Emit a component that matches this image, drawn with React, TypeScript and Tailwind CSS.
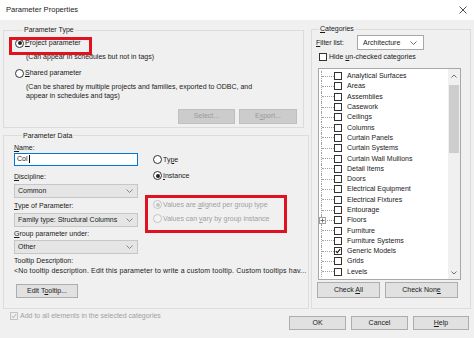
import React from "react";

const Chevron = ({ color = "#606060" }: { color?: string }) => (
  <svg width="7" height="4" viewBox="0 0 7 4" className="shrink-0">
    <path d="M0.5 0.5 L3.5 3.5 L6.5 0.5" fill="none" stroke={color} strokeWidth="0.9" />
  </svg>
);

const Radio = ({ checked, disabled }: { checked?: boolean; disabled?: boolean }) => (
  <span
    className={
      "w-[9px] h-[9px] rounded-full border flex items-center justify-center shrink-0 " +
      (disabled ? "border-[#c4c4c4] bg-[#f4f4f4]" : "border-[#333333] bg-white")
    }
  >
    {checked && (
      <span className={"w-[4px] h-[4px] rounded-full " + (disabled ? "bg-[#c4c4c4]" : "bg-[#222222]")} />
    )}
  </span>
);

const Check = ({ checked, disabled }: { checked?: boolean; disabled?: boolean }) => (
  <span
    className={
      "w-[8px] h-[8px] border flex items-center justify-center shrink-0 " +
      (disabled ? "border-[#c4c4c4] bg-[#f0f0f0]" : "border-[#333333] bg-white")
    }
  >
    {checked && (
      <svg width="6" height="6" viewBox="0 0 6 6">
        <path d="M0.8 3.2 L2.3 4.7 L5.2 1.2" fill="none" stroke={disabled ? "#c4c4c4" : "#111"} strokeWidth="1.1" />
      </svg>
    )}
  </span>
);

const Combo = ({ text }: { text: string }) => (
  <div className="h-[14px] w-[124px] bg-[#e5e5e5] border border-[#c6c6c6] flex items-center justify-between pl-[3px] pr-[4px]">
    <span className="leading-[10px] whitespace-nowrap">{text}</span>
    <Chevron color="#7a7a7a" />
  </div>
);

const Btn = ({ w, h, children, disabled }: { w: string; h: string; children: React.ReactNode; disabled?: boolean }) => (
  <div
    className={
      w +
      " " +
      h +
      " border flex items-center justify-center " +
      (disabled ? "bg-[#cccccc] border-[#bfbfbf] text-[#9a9a9a]" : "bg-[#e1e1e1] border-[#adadad]")
    }
  >
    <span className="leading-[10px] whitespace-nowrap">{children}</span>
  </div>
);

const items = [
  "Analytical Surfaces",
  "Areas",
  "Assemblies",
  "Casework",
  "Ceilings",
  "Columns",
  "Curtain Panels",
  "Curtain Systems",
  "Curtain Wall Mullions",
  "Detail Items",
  "Doors",
  "Electrical Equipment",
  "Electrical Fixtures",
  "Entourage",
  "Floors",
  "Furniture",
  "Furniture Systems",
  "Generic Models",
  "Grids",
  "Levels",
];

export default function App() {
  return (
    <div className="relative w-[474px] h-[338px] flex flex-col bg-[#f0f0f0] font-['Liberation_Sans',Arial,sans-serif] text-[7px] text-[#1a1a1a] overflow-hidden">
      {/* Title bar */}
      <div className="h-[20px] bg-white flex items-center justify-between pl-[6px] pr-[7px] shrink-0">
        <span className="text-[7.6px] leading-[10px]">Parameter Properties</span>
        <svg width="8" height="8" viewBox="0 0 8 8">
          <path d="M0.5 0.5 L7.5 7.5 M7.5 0.5 L0.5 7.5" stroke="#222" strokeWidth="0.8" />
        </svg>
      </div>

      {/* Body */}
      <div className="flex-1 flex flex-col pl-[3px] pt-[4px]">
        <div className="flex gap-[7px]">
          {/* Left column */}
          <div className="w-[301px] pt-[1px] flex flex-col">
            <fieldset className="border border-[#dcdcdc] pl-[11px] pr-[6px] pb-[3px]">
              <legend className="ml-[8px] px-[1px] leading-[10px]">Parameter Type</legend>
              <div className="mt-[2px] h-[12px] flex items-center gap-[1px]">
                <Radio checked />
                <span className="leading-[10px]">
                  <u>P</u>roject parameter
                </span>
              </div>
              <div className="mt-[3px] pl-[11px] leading-[10px]">(Can appear in schedules but not in tags)</div>
              <div className="mt-[5px] h-[12px] flex items-center gap-[1px]">
                <Radio />
                <span className="leading-[10px]">
                  <u>S</u>hared parameter
                </span>
              </div>
              <div className="mt-[2.5px] pl-[11px] leading-[9px]">
                (Can be shared by multiple projects and families, exported to ODBC, and
                <br />
                appear in schedules and tags)
              </div>
              <div className="mt-[9px] flex justify-end gap-[4px]">
                <Btn w="w-[57px]" h="h-[15px]" disabled>
                  Select...
                </Btn>
                <Btn w="w-[58px]" h="h-[15px]" disabled>
                  E<u>x</u>port...
                </Btn>
              </div>
            </fieldset>

            <fieldset className="mt-[3px] border border-[#dcdcdc] pl-[10px] pr-[2px] pb-[10px]">
              <legend className="ml-[8px] px-[1px] leading-[10px]">Parameter Data</legend>
              <div className="flex gap-[15px]">
                <div className="w-[124px] flex flex-col">
                  <div className="mt-[2px] leading-[10px]">
                    <u>N</u>ame:
                  </div>
                  <div className="h-[13px] bg-white border border-[#0078d7] flex items-center pl-[2px]">
                    <span className="leading-[10px]">Col</span>
                    <span className="w-[1px] h-[8px] bg-black ml-[1px]" />
                  </div>
                  <div className="mt-[6px] leading-[10px]">
                    <u>D</u>iscipline:
                  </div>
                  <div className="mt-[2px]">
                    <Combo text="Common" />
                  </div>
                  <div className="mt-[3px] leading-[10px]">
                    <u>T</u>ype of Parameter:
                  </div>
                  <div className="mt-[2px]">
                    <Combo text="Family type: Structural Columns" />
                  </div>
                  <div className="mt-[2px] leading-[10px]">
                    <u>G</u>roup parameter under:
                  </div>
                  <div className="mt-[1px]">
                    <Combo text="Other" />
                  </div>
                </div>
                <div className="flex flex-col">
                  <div className="mt-[13px] h-[12px] flex items-center gap-[1px]">
                    <Radio />
                    <span className="leading-[10px]">
                      Ty<u>p</u>e
                    </span>
                  </div>
                  <div className="mt-[4px] h-[12px] flex items-center gap-[1px]">
                    <Radio checked />
                    <span className="leading-[10px]">
                      <u>I</u>nstance
                    </span>
                  </div>
                  <div className="mt-[17px] h-[12px] flex items-center gap-[1px] text-[#a0a0a0]">
                    <Radio checked disabled />
                    <span className="leading-[10px] whitespace-nowrap">
                      Values are <u>a</u>ligned per group type
                    </span>
                  </div>
                  <div className="mt-[2px] h-[12px] flex items-center gap-[1px] text-[#a0a0a0]">
                    <Radio disabled />
                    <span className="leading-[10px] whitespace-nowrap">
                      Values can <u>v</u>ary by group instance
                    </span>
                  </div>
                </div>
              </div>
              <div className="mt-[2px] leading-[10px]">Tooltip Description:</div>
              <div className="leading-[10px] whitespace-nowrap overflow-hidden tracking-[0.15px]">
                &lt;No tooltip description. Edit this parameter to write a custom tooltip. Custom tooltips hav...
              </div>
              <div className="mt-[8px] ml-[2px]">
                <Btn w="w-[62px]" h="h-[14px]">
                  Edit T<u>o</u>oltip...
                </Btn>
              </div>
            </fieldset>
          </div>

          {/* Right column */}
          <fieldset className="w-[160px] border border-[#dcdcdc] pl-[4px] pr-[3px] pb-[7px] flex flex-col">
            <legend className="ml-[3px] px-[1px] leading-[10px]">
              <u>C</u>ategories
            </legend>
            <div className="mt-[1px] flex items-center">
              <span className="w-[41px] leading-[10px]">
                <u>F</u>ilter list:
              </span>
              <div className="w-[67px] h-[15px] bg-white border border-[#a8a8a8] flex items-center justify-between pl-[5px] pr-[6px]">
                <span className="leading-[10px]">Architecture</span>
                <Chevron />
              </div>
            </div>
            <div className="mt-[2px] ml-[3px] h-[10px] flex items-center gap-[2px]">
              <Check />
              <span className="leading-[10px] whitespace-nowrap">
                Hide <u>u</u>n-checked categories
              </span>
            </div>
            <div className="mt-[6px] ml-[2px] w-[143px] h-[212px] bg-white border border-[#a8a8a8] flex">
              <div className="flex-1 pt-[2px] pl-[2px] flex flex-col">
                {items.map((it) => (
                  <div key={it} className="relative h-[10.3px] flex items-center">
                    <div className="w-[13px] h-full border-l border-dotted border-[#a0a0a0] flex items-center">
                      <div className="w-full border-t border-dotted border-[#a0a0a0]" />
                    </div>
                    {it === "Floors" && (
                      <span className="absolute left-[-2px] top-[1.5px] w-[7px] h-[7px] border border-[#a0a0a0] bg-white flex items-center justify-center">
                        <svg width="5" height="5" viewBox="0 0 5 5">
                          <path d="M0.5 2.5 H4.5 M2.5 0.5 V4.5" stroke="#555" strokeWidth="0.8" />
                        </svg>
                      </span>
                    )}
                    <Check checked={it === "Generic Models"} />
                    <span className="ml-[5px] leading-[10px] whitespace-nowrap">{it}</span>
                  </div>
                ))}
              </div>
              <div className="w-[12px] bg-[#f0f0f0] flex flex-col items-center">
                <div className="h-[14px] flex items-center">
                  <svg width="6" height="4" viewBox="0 0 6 4">
                    <path d="M0.5 3.5 L3 1 L5.5 3.5" fill="none" stroke="#606060" strokeWidth="0.9" />
                  </svg>
                </div>
                <div className="mt-[2px] w-[10px] h-[68px] bg-[#cdcdcd]" />
                <div className="flex-1" />
                <div className="h-[12px] flex items-center">
                  <svg width="6" height="4" viewBox="0 0 6 4">
                    <path d="M0.5 0.5 L3 3 L5.5 0.5" fill="none" stroke="#606060" strokeWidth="0.9" />
                  </svg>
                </div>
              </div>
            </div>
            <div className="mt-[2px] ml-[1px] flex gap-[5px]">
              <Btn w="w-[63px]" h="h-[16px]">
                Check <u>A</u>ll
              </Btn>
              <Btn w="w-[73px]" h="h-[16px]">
                Check Non<u>e</u>
              </Btn>
            </div>
          </fieldset>
        </div>

        {/* Bottom row */}
        <div className="flex items-start">
          <div className="mt-[2px] ml-[7px] h-[10px] flex items-center gap-[2px] text-[#a0a0a0]">
            <Check checked disabled />
            <span className="leading-[10px] whitespace-nowrap">Add to all elements in the selected categories</span>
          </div>
          <div className="flex-1" />
          <div className="mt-[7px] mr-[5px] flex gap-[5px]">
            <Btn w="w-[57px]" h="h-[14px]">
              OK
            </Btn>
            <Btn w="w-[57px]" h="h-[14px]">
              Cancel
            </Btn>
            <Btn w="w-[56px]" h="h-[14px]">
              <u>H</u>elp
            </Btn>
          </div>
        </div>
      </div>

      {/* Red annotation boxes */}
      <div className="absolute left-[9px] top-[37px] w-[83px] h-[18px] border-[3px] border-[#e0121f]" />
      <div className="absolute left-[145px] top-[195px] w-[142px] h-[38px] border-[3px] border-[#e0121f]" />
    </div>
  );
}
